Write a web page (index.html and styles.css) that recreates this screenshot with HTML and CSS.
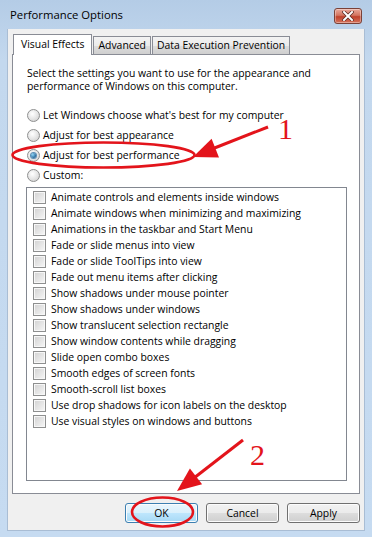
FILE: index.html
```html
<!DOCTYPE html>
<html lang="en">
<head>
    <meta charset="UTF-8">
    <title>Performance Options</title>
    <link rel="stylesheet" href="styles.css">
</head>
<body>
    <div class="window">
        <div class="titlebar">
            <span class="title">Performance Options</span>
            <button class="close" aria-label="Close">
                <svg width="12" height="10" viewBox="0 0 12 10">
                    <path d="M2 1 L10 9 M10 1 L2 9" stroke="#5a2a22" stroke-width="3.4" stroke-linecap="square"/>
                    <path d="M2 1 L10 9 M10 1 L2 9" stroke="#fff" stroke-width="2" stroke-linecap="square"/>
                </svg>
            </button>
        </div>

        <div class="client">
            <div class="tabs">
                <div class="tab selected">Visual Effects</div>
                <div class="tab">Advanced</div>
                <div class="tab">Data Execution Prevention</div>
            </div>

            <div class="panel">
                <p class="intro">Select the settings you want to use for the appearance and<br>performance of Windows on this computer.</p>

                <div class="options">
                    <label class="option"><span class="radio"></span>Let Windows choose what's best for my computer</label>
                    <label class="option"><span class="radio"></span>Adjust for best appearance</label>
                    <label class="option"><span class="radio on"></span>Adjust for best performance</label>
                    <label class="option"><span class="radio"></span>Custom:</label>
                </div>

                <ul class="effects">
                    <li><span class="check"></span>Animate controls and elements inside windows</li>
                    <li><span class="check"></span>Animate windows when minimizing and maximizing</li>
                    <li><span class="check"></span>Animations in the taskbar and Start Menu</li>
                    <li><span class="check"></span>Fade or slide menus into view</li>
                    <li><span class="check"></span>Fade or slide ToolTips into view</li>
                    <li><span class="check"></span>Fade out menu items after clicking</li>
                    <li><span class="check"></span>Show shadows under mouse pointer</li>
                    <li><span class="check"></span>Show shadows under windows</li>
                    <li><span class="check"></span>Show translucent selection rectangle</li>
                    <li><span class="check"></span>Show window contents while dragging</li>
                    <li><span class="check"></span>Slide open combo boxes</li>
                    <li><span class="check"></span>Smooth edges of screen fonts</li>
                    <li><span class="check"></span>Smooth-scroll list boxes</li>
                    <li><span class="check"></span>Use drop shadows for icon labels on the desktop</li>
                    <li><span class="check"></span>Use visual styles on windows and buttons</li>
                </ul>
            </div>

            <div class="buttons">
                <button class="btn default">OK</button>
                <button class="btn">Cancel</button>
                <button class="btn">Apply</button>
            </div>
        </div>

        <!-- red hand-drawn marks over the dialog -->
        <svg class="marks" width="372" height="537" viewBox="0 0 372 537">
            <g fill="none" stroke="#e3141b" stroke-width="2.6">
                <ellipse cx="103.5" cy="155" rx="91" ry="12.5"/>
                <ellipse cx="162.5" cy="512" rx="30.5" ry="14.5"/>
                <line x1="268" y1="127" x2="212" y2="149" stroke-width="3"/>
                <line x1="243" y1="440" x2="194" y2="478" stroke-width="3"/>
            </g>
            <g fill="#e3141b">
                <polygon points="193,157 211.6,138.8 219,157.4"/>
                <polygon points="177,491 189.9,468.4 202.1,484.2"/>
                <text x="278" y="139" class="mark-num">1</text>
                <text x="250" y="465" class="mark-num">2</text>
            </g>
        </svg>
    </div>
</body>
</html>
```

FILE: styles.css
```css
body {
    margin: 0;
    font-family: "Open Sans", "Noto Sans", sans-serif;
    font-size: 10.4px;
    color: #000;
}
.window {
    position: relative;
    width: 372px;
    height: 537px;
    box-sizing: border-box;
    background: linear-gradient(to bottom, #b4cce6, #c3d8ee 60px, #c6dbf1);
    display: flex;
    flex-direction: column;
    overflow: hidden;
}
.titlebar {
    height: 29px;
    display: flex;
    align-items: flex-start;
    padding: 0 10px 0 10px;
}
.title {
    font-size: 11.3px;
    margin-top: 7px;
    color: #000;
}
.close {
    margin-left: auto;
    margin-top: 8px;
    width: 28px;
    height: 16px;
    padding: 0;
    border: 1px solid #7a4137;
    border-radius: 3px;
    background: linear-gradient(to bottom, #e9a99b, #d47560 45%, #c0412b 55%, #d5735c);
    display: flex;
    align-items: center;
    justify-content: center;
    box-shadow: inset 0 0 0 1px rgba(255, 255, 255, 0.35);
}
.client {
    margin: 0 7px 6px 7px;
    flex: 1;
    background: #f0f0f0;
    padding: 5px 4px 0 4px;
    border: 1px solid #a9bdd4;
    border-top: none;
    box-sizing: border-box;
}
.tabs {
    display: flex;
    align-items: flex-end;
    height: 20px;
    padding-left: 1px;
    position: relative;
    z-index: 1;
}
.tab {
    height: 18px;
    box-sizing: border-box;
    border: 1px solid #898c95;
    border-bottom: none;
    padding: 1px 4px 0 4px;
    background: linear-gradient(to bottom, #f3f3f3, #ebebeb 50%, #dddddd 51%, #cfcfcf);
    margin-right: 1px;
    white-space: nowrap;
}
.tab.selected {
    height: 21px;
    margin-bottom: -1px;
    background: #fff;
    padding: 2px 7px 0 7px;
}
.panel {
    height: 440px;
    box-sizing: border-box;
    border: 1px solid #898c95;
    background: #fff;
}
.intro {
    margin: 12px 0 0 14px;
    line-height: 13px;
}
.options {
    margin: 12px 0 0 14px;
    display: flex;
    flex-direction: column;
}
.option {
    height: 20px;
    display: flex;
    align-items: center;
    gap: 3px;
}
.radio {
    width: 13px;
    height: 13px;
    box-sizing: border-box;
    border-radius: 50%;
    border: 1px solid #8e8f8f;
    background: radial-gradient(circle at 40% 35%, #ffffff, #e6e6e6 50%, #c9c9c9);
    display: flex;
    align-items: center;
    justify-content: center;
}
.radio.on::after {
    content: "";
    width: 5px;
    height: 5px;
    border-radius: 50%;
    background: radial-gradient(circle at 35% 35%, #8fd6f7, #1e5f93 75%);
    box-shadow: 0 0 0 1px #5b8eb5;
}
.effects {
    list-style: none;
    margin: 2px 0 0 13px;
    padding: 1px 0 0 6px;
    width: 321px;
    height: 294px;
    box-sizing: border-box;
    border: 1px solid #828790;
}
.effects li {
    height: 16px;
    display: flex;
    align-items: center;
    gap: 5px;
}
.check {
    width: 13px;
    height: 13px;
    box-sizing: border-box;
    border: 1px solid #8e8f8f;
    background: linear-gradient(135deg, #d2d2d2, #efefef 80%, #fbfbfb);
    box-shadow: inset 0 0 0 1px #f7f7f7;
}
.buttons {
    display: flex;
    justify-content: flex-end;
    gap: 8px;
    margin-top: 9px;
}
.btn {
    width: 73px;
    height: 20px;
    padding: 0;
    font-family: "Open Sans", "Noto Sans", sans-serif;
    font-size: 10.4px;
    color: #000;
    border: 1px solid #707070;
    border-radius: 3px;
    background: linear-gradient(to bottom, #f2f2f2, #ebebeb 50%, #dddddd 51%, #cfcfcf);
    box-shadow: inset 0 0 0 1px #fcfcfc;
}
.btn.default {
    border-color: #3c7fb1;
    background: linear-gradient(to bottom, #eaf6fd, #d9f0fc 50%, #bee6fd 51%, #a7d9f5);
}
.marks {
    position: absolute;
    left: 0;
    top: 0;
    pointer-events: none;
}
.mark-num {
    font-family: "Liberation Serif", serif;
    font-size: 30px;
}
```
